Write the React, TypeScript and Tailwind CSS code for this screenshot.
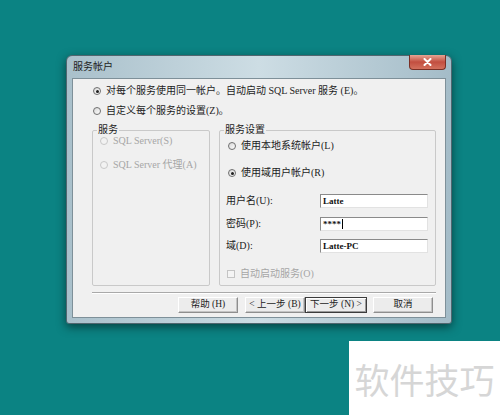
import React from 'react';

// radio button in the classic sunken style
const Radio: React.FC<{ checked?: boolean; disabled?: boolean }> = ({ checked = false, disabled = false }) => (
  <span
    className={`flex h-[8px] w-[8px] shrink-0 items-center justify-center rounded-full border ${
      disabled ? 'border-[#c8c8c8] bg-[#f2f2f2]' : 'border-[#6f6f6f] bg-gradient-to-br from-[#d6d6d6] to-white'
    }`}
  >
    {checked && <span className="h-[3px] w-[3px] rounded-full bg-[#1e1e1e]" />}
  </span>
);

const Field: React.FC<{ label: string; value: string; caret?: boolean; className?: string }> = ({ label, value, caret, className = '' }) => (
  <div className={`flex h-[14px] items-center ${className}`}>
    <span className="w-[94px]">{label}</span>
    <div className="flex h-[14px] w-[108px] items-center border border-t-[#8a8a8a] border-l-[#8a8a8a] border-r-[#e2e2e2] border-b-[#e2e2e2] bg-white pl-[2px] text-[9px] font-bold text-[#111]">
      {value}
      {caret && <span className="ml-[1px] h-[10px] w-[1px] bg-black" />}
    </div>
  </div>
);

const Button: React.FC<{ children: React.ReactNode; wide?: boolean; primary?: boolean; className?: string }> = ({ children, wide, primary, className = '' }) => (
  <button
    className={`flex h-[16px] items-center justify-center whitespace-pre bg-[#ececec] text-[9.5px] leading-none text-[#1c1c1c] ${wide ? 'w-[62px]' : 'w-[60px]'} ${
      primary
        ? 'border border-[#3c3c3c] shadow-[inset_1px_1px_0_#fff,inset_-1px_-1px_0_#9a9a9a]'
        : 'border border-t-white border-l-white border-r-[#8e8e8e] border-b-[#8e8e8e] shadow-[inset_-1px_-1px_0_#c4c4c4]'
    } ${className}`}
  >
    {children}
  </button>
);

export default function App() {
  return (
    <div className="relative h-[415px] w-[500px] overflow-hidden bg-[#0b8383] pl-[66px] pt-[55px] font-['Liberation_Serif','Noto_Sans_CJK_SC',serif] text-[10px] leading-[12px] text-[#1c1c1c]">
      {/* dialog window */}
      <div className="flex h-[269px] w-[386px] flex-col rounded-t-[6px] rounded-b-[3px] border border-[#51666f] bg-gradient-to-r from-[#a9c0cb] via-[#cddde4] to-[#a4bcc8] px-[5px] pb-[5px] shadow-[0_3px_10px_rgba(0,0,0,0.5)]">
        <div className="flex h-[22px] items-start justify-between">
          <span className="pl-[1px] pt-[4px] font-['Noto_Sans_CJK_SC',sans-serif] text-[#222]">服务帐户</span>
          <div className="-mt-[1px] flex h-[15px] w-[37px] items-center justify-center rounded-b-[4px] border border-t-0 border-[#7a2f25] bg-gradient-to-b from-[#e4a494] via-[#c24e40] to-[#d3705d]">
            <svg width="9" height="8" viewBox="0 0 9 8">
              <path d="M1.5 1 L7.5 7 M7.5 1 L1.5 7" stroke="white" strokeWidth="2" strokeLinecap="round" />
            </svg>
          </div>
        </div>

        <div className="flex flex-1 flex-col border border-[#7e9099] bg-[#f0f0f0] pl-[19px] pt-[6px]">
          <div className="flex h-[12px] items-center gap-[5px] pl-[1px]">
            <Radio checked />
            <span>对每个服务使用同一帐户。自动启动 SQL Server 服务 (E)。</span>
          </div>
          <div className="mt-[8px] flex h-[12px] items-center gap-[5px] pl-[1px]">
            <Radio />
            <span>自定义每个服务的设置(Z)。</span>
          </div>

          <div className="mt-[8px] flex gap-[9px]">
            <fieldset className="h-[161px] w-[118px] rounded-[2px] border border-[#c9c9c9] text-[#a6a6a6]">
              <legend className="ml-[4px] px-[1px] leading-[10px] text-[#1c1c1c]">服务</legend>
              <div className="pl-[7px]">
                <div className="flex h-[12px] items-center gap-[5px]">
                  <Radio disabled />
                  <span>SQL Server(S)</span>
                </div>
                <div className="mt-[12px] flex h-[12px] items-center gap-[5px]">
                  <Radio disabled />
                  <span>SQL Server 代理(A)</span>
                </div>
              </div>
            </fieldset>

            <fieldset className="h-[161px] w-[217px] rounded-[2px] border border-[#c9c9c9]">
              <legend className="ml-[4px] px-[1px] leading-[10px]">服务设置</legend>
              <div className="pl-[6px]">
                <div className="mt-[5px] flex h-[12px] items-center gap-[5px] pl-[2px]">
                  <Radio />
                  <span>使用本地系统帐户(L)</span>
                </div>
                <div className="mt-[15px] flex h-[12px] items-center gap-[5px] pl-[2px]">
                  <Radio checked />
                  <span>使用域用户帐户(R)</span>
                </div>
                <Field label="用户名(U):" value="Latte" className="mt-[15px]" />
                <Field label="密码(P):" value="****" caret className="mt-[9px]" />
                <Field label="域(D):" value="Latte-PC" className="mt-[8px]" />
                <div className="mt-[15px] flex h-[12px] items-center gap-[5px] pl-[1px] text-[#a6a6a6]">
                  <span className="h-[8px] w-[8px] border border-[#c4c4c4] bg-[#f4f4f4]" />
                  <span>自动启动服务(O)</span>
                </div>
              </div>
            </fieldset>
          </div>

          <div className="mt-[6px] h-[2px] w-[344px] border-t border-b border-t-[#a9a9a9] border-b-white" />

          <div className="ml-[86px] mt-[3px] flex">
            <Button>帮助 (H)</Button>
            <Button className="ml-[7px]">&lt; 上一步 (B)</Button>
            <Button wide primary>下一步 (N) &gt;</Button>
            <Button className="ml-[6px]">取消</Button>
          </div>
        </div>
      </div>

      {/* watermark */}
      <div className="absolute left-[349px] top-[341px] flex h-[74px] w-[151px] items-center justify-center bg-white font-['Noto_Sans_CJK_SC',sans-serif] text-[35px] leading-none text-[#d6d6d6]">
        软件技巧
      </div>
    </div>
  );
}
